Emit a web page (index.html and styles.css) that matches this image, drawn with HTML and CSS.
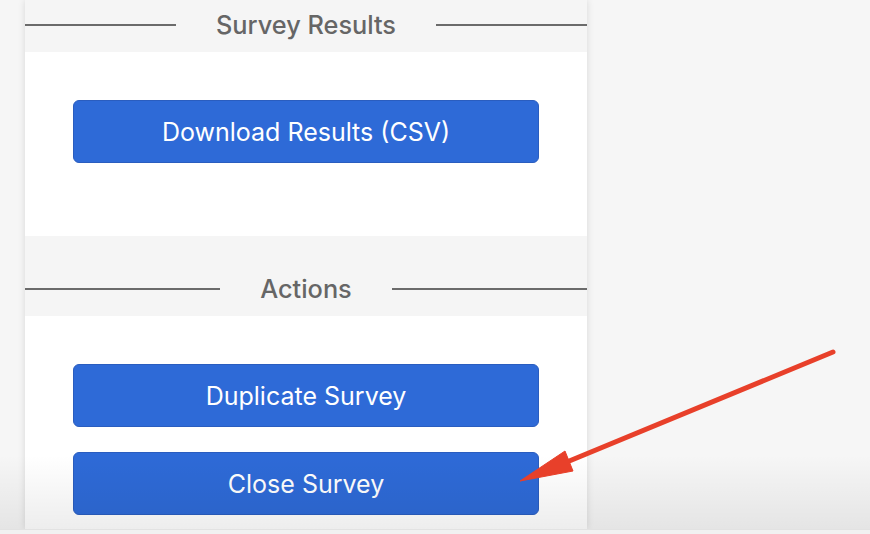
FILE: index.html
```html
<!DOCTYPE html>
<html lang="en">
<head>
<meta charset="utf-8">
<title>Survey</title>
<link rel="stylesheet" href="styles.css">
</head>
<body>
<div class="page">
  <div class="stage">
    <div class="panel">
      <div class="band band-top">
        <div class="divider">
          <span class="rule"></span>
          <span class="divider-label">Survey Results</span>
          <span class="rule"></span>
        </div>
      </div>
      <div class="section section-results">
        <button class="btn">Download Results (CSV)</button>
      </div>
      <div class="band band-actions">
        <div class="divider">
          <span class="rule"></span>
          <span class="divider-label">Actions</span>
          <span class="rule"></span>
        </div>
      </div>
      <div class="section section-actions">
        <button class="btn">Duplicate Survey</button>
        <button class="btn">Close Survey</button>
      </div>
    </div>
  </div>
  <div class="footer-strip"></div>
  <div class="bottom-fade"></div>
  <svg class="arrow" width="870" height="534" viewBox="0 0 870 534">
    <line x1="833" y1="352" x2="562" y2="464" stroke="#e8402a" stroke-width="5" stroke-linecap="round"/>
    <polygon points="520,481 565,451 573,471" fill="#e8402a" stroke="#e8402a" stroke-width="1" stroke-linejoin="round"/>
  </svg>
</div>
</body>
</html>
```

FILE: styles.css
```css
* { box-sizing: border-box; }

html, body {
  margin: 0;
  padding: 0;
  width: 870px;
  height: 534px;
  overflow: hidden;
}

body {
  background: #f6f6f6;
  font-family: Inter, "Liberation Sans", Arial, sans-serif;
}

.page {
  position: relative;
  width: 870px;
  height: 534px;
  display: flex;
  flex-direction: column;
}

.stage {
  height: 529px;
  padding-left: 25px;
  display: flex;
}

.panel {
  width: 562px;
  height: 529px;
  background: #ffffff;
  box-shadow: 0 0 7px rgba(0, 0, 0, 0.13);
  display: flex;
  flex-direction: column;
}

.band {
  background: #f5f5f5;
}

.band-top {
  height: 52px;
  padding: 12px 0 14px;
}

.band-actions {
  height: 80px;
  padding: 40px 0 14px;
}

.divider {
  height: 26px;
  display: flex;
  align-items: center;
}

.rule {
  flex: 1;
  height: 2px;
  background: #6b6b6b;
}

.divider-label {
  margin: 0 40px;
  font-size: 25.3px;
  font-weight: 500;
  color: #666666;
  line-height: 26px;
}

.section {
  display: flex;
  flex-direction: column;
  align-items: center;
}

.section-results {
  height: 184px;
  padding-top: 48px;
}

.section-actions {
  flex: 1;
  padding-top: 48px;
  gap: 25px;
}

.btn {
  width: 466px;
  height: 63px;
  border: 1px solid #2a5dbf;
  border-radius: 6px;
  background: #2e6ad7;
  color: #ffffff;
  font-family: Inter, "Liberation Sans", Arial, sans-serif;
  font-size: 25px;
  font-weight: 400;
  padding: 0;
  display: flex;
  align-items: center;
  justify-content: center;
}

.footer-strip {
  height: 5px;
  background: #f1f1f1;
  border-top: 1px solid #e2e2e2;
}

.bottom-fade {
  position: absolute;
  left: 0;
  top: 455px;
  width: 870px;
  height: 74px;
  background: linear-gradient(to bottom, rgba(0, 0, 0, 0), rgba(0, 0, 0, 0.07));
  pointer-events: none;
}

.arrow {
  position: absolute;
  left: 0;
  top: 0;
  pointer-events: none;
}
```
